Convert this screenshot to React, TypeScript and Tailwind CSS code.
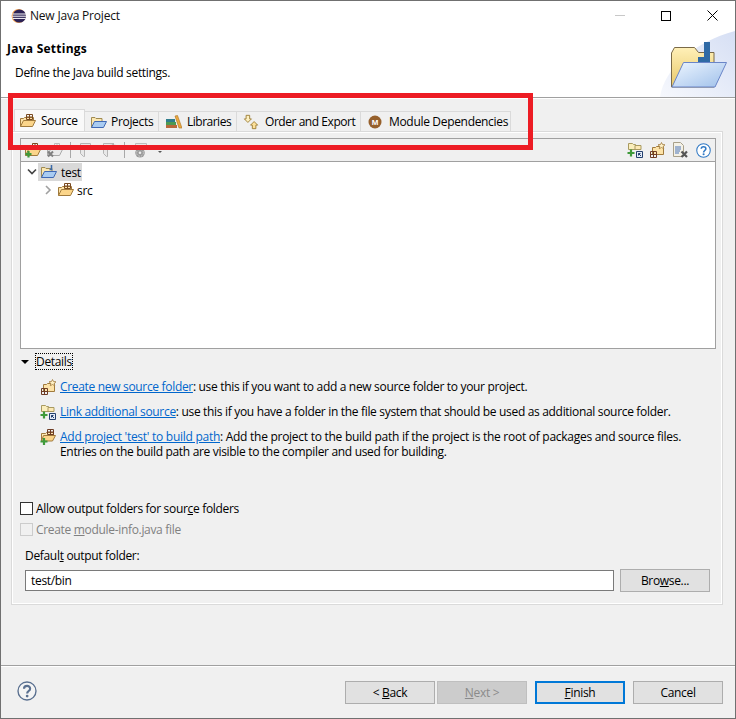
import type { ReactNode } from 'react';

function EclipseIcon() {
  return (
    <svg width="16" height="16" viewBox="0 0 16 16">
      <circle cx="7.6" cy="8" r="7" fill="#f0a050" />
      <circle cx="8.4" cy="8" r="6.6" fill="#2c2255" />
      <path d="M1.500 6h13.500M1.200 8.200h14M1.600 10.400h13.200" stroke="#fff" strokeWidth="1" />
    </svg>
  );
}

function OrangeFolder({ disabled = false }: { disabled?: boolean }) {
  const body = disabled ? '#dedede' : '#fde3a8';
  const line = disabled ? '#aaaaaa' : '#a07a3c';
  return (
    <>
      <path d="M.5 13.500V5.500h3l1-1h9v3" fill={body} stroke={line} />
      <path d="M.5 13.500l3-6h12l-3 6z" fill={disabled ? '#eaeaea' : '#fbd58a'} stroke={line} />
    </>
  );
}

function SourceFolder() {
  return (
    <svg width="16" height="16" viewBox="0 0 16 16">
      <OrangeFolder />
      <path d="M6.500 1.500h6v5h-6zM9.500 1v6M6 4h7" fill="none" stroke="#7a4a20" strokeWidth="1" />
    </svg>
  );
}

function ProjectFolder({ jmark = false }: { jmark?: boolean }) {
  return (
    <svg width="17" height="16" viewBox="0 0 17 16">
      <path d="M1.500 13.500V3.500h3.500l1 1h6v3" fill="#fbe7b0" stroke="#a08a50" />
      <path d="M1.500 13.500l3-6h12l-3 6z" fill="#a9ccf2" stroke="#3f68b4" />
      {jmark && <path d="M11.500 1v4.500h-2" fill="none" stroke="#3a6aa8" strokeWidth="1.500" />}
    </svg>
  );
}

function Books() {
  return (
    <svg width="16" height="16" viewBox="0 0 16 16">
      <path d="M0 5h9v3H0z" fill="#2f7d8c" />
      <path d="M0 8h10v3H0z" fill="#4d9a52" />
      <path d="M0 11h11v3H0z" fill="#b8683a" />
      <path d="M9 2l2.500-.5L16 14h-3z" fill="#eba93e" stroke="#a8701e" strokeWidth=".6" />
    </svg>
  );
}

function OrderArrows() {
  return (
    <svg width="16" height="16" viewBox="0 0 18 16">
      <path d="M3.500.5h4v4h2l-4 4-4-4h2z" fill="#fdf0c0" stroke="#9a7a30" />
      <path d="M12.500 7.500l4 4h-2v4h-4v-4h-2z" fill="#fce09a" stroke="#9a7a30" />
    </svg>
  );
}

function ModuleIcon() {
  return (
    <svg width="14" height="14" viewBox="0 0 14 14">
      <circle cx="7" cy="7" r="6.500" fill="#96602c" />
      <text x="7" y="10" textAnchor="middle" fontSize="8" fontWeight="700" fill="#fff" fontFamily="'Liberation Sans', sans-serif">
        M
      </text>
    </svg>
  );
}

function NewSourceIcon({ disabled = false }: { disabled?: boolean }) {
  return (
    <svg width="17" height="16" viewBox="0 0 17 16">
      <OrangeFolder disabled={disabled} />
      <path d="M7.500 1.500h5v5h-5zM10 1v6M7 4h6" fill="none" stroke={disabled ? '#bbbbbb' : '#7a4a20'} />
      {disabled ? (
        <path d="M1 9.500l5 5M6 9.500l-5 5" stroke="#808080" strokeWidth="2" />
      ) : (
        <path d="M3.500 9v6.500M.5 12.200h6" stroke="#3f9a3a" strokeWidth="2.200" />
      )}
    </svg>
  );
}

function DisabledPage({ mark = false }: { mark?: boolean }) {
  return (
    <svg width="15" height="16" viewBox="0 0 15 16">
      <path d="M1.500 1.500h10v3h-6v10h-1l-3-3z" fill="#e8e8e8" stroke="#b4b4b4" />
      {mark && <path d="M11 1v5M8.500 3.500h5" stroke="#b0b0b0" strokeWidth="1.500" />}
    </svg>
  );
}

function DisabledGear() {
  return (
    <svg width="14" height="16" viewBox="0 0 14 16">
      <path d="M1.500 1.500h11v6h-11z" fill="#e8e8e8" stroke="#bcbcbc" />
      <circle cx="6" cy="10.800" r="4.800" fill="#9c9c9c" />
      <circle cx="6" cy="10.800" r="3.400" fill="none" stroke="#cfcfcf" strokeDasharray="1.500 1.200" />
      <circle cx="6" cy="10.800" r="1.300" fill="#ececec" />
    </svg>
  );
}

function LinkFolder() {
  return (
    <svg width="16" height="16" viewBox="0 0 16 16">
      <path d="M1.500 7.500v-6h4l1 1h2v5z" fill="#fbeebc" stroke="#a89a60" />
      <path d="M8 3.500h6v4H8z" fill="#fde9b4" stroke="#a89a60" />
      <path d="M4 7.500v7M.5 11h7" stroke="#3f9a3a" strokeWidth="2.200" />
      <path d="M9.500 9.500h6v6h-6z" fill="#e4ecf8" stroke="#24406e" />
      <path d="M11.500 11.500l2.500 2.500M11.500 13.500v-2h2" fill="none" stroke="#24406e" />
    </svg>
  );
}

function StarFolder() {
  return (
    <svg width="17" height="16" viewBox="0 0 17 16">
      <path d="M3.500 12.500v-7h3l1-1h7v8z" fill="#fde3a8" stroke="#a07a3c" />
      <path d="M12.500 .5l1 2 2.500.3-1.800 1.600.5 2.300-2.200-1.200-2.200 1.200.5-2.300L9 2.800l2.500-.3z" fill="#fef0c4" stroke="#a07a3c" strokeWidth=".8" />
      <path d="M1.500 9.500h6v6h-6zM4.500 9v7M1 12.500h7" fill="none" stroke="#6e3c24" />
    </svg>
  );
}

function RemoveDoc() {
  return (
    <svg width="16" height="16" viewBox="0 0 16 16">
      <path d="M1.500 .5h7l3 3v11h-10z" fill="#f4f1e6" stroke="#a8a08a" />
      <path d="M3 5h6M3 7h6M3 9h5M3 11h4" stroke="#4a74b8" />
      <path d="M9.500 9.500l5.500 5.500M15 9.500L9.500 15" stroke="#555" strokeWidth="2.200" />
    </svg>
  );
}

function HelpIcon({ size, color, fill }: { size: number; color: string; fill: string }) {
  return (
    <svg width={size} height={size} viewBox="0 0 16 16">
      <circle cx="8" cy="8" r="7.200" fill={fill} stroke={color} strokeWidth="1.100" />
      <path d="M5.600 6.200c0-3 4.900-3 4.900-.1 0 1.900-2.400 1.900-2.400 3.900" fill="none" stroke={color} strokeWidth="1.700" />
      <circle cx="8.100" cy="12" r="1.100" fill={color} />
    </svg>
  );
}

function AddFolder() {
  return (
    <svg width="16" height="16" viewBox="0 0 16 16">
      <path d="M1.500 12V4.500h4l1-1h7v3" fill="#fde9b4" stroke="#a07a3c" />
      <path d="M1.500 12l2-5.500h12l-3 5.500z" fill="#fbd58a" stroke="#a07a3c" />
      <path d="M7.500 .5h6v5h-6zM10.500 0v6M7 3h7" fill="none" stroke="#6e3c24" />
      <path d="M4 9v7M.5 12.500h7" stroke="#3f9a3a" strokeWidth="2.200" />
    </svg>
  );
}

function BannerIcon() {
  return (
    <svg width="80" height="67" viewBox="655 30 80 67" className="shrink-0">
      <defs>
        <linearGradient id="wash" x1="0" y1="1" x2="1" y2="0">
          <stop offset="0" stopColor="#f6f8fd" />
          <stop offset="1" stopColor="#d6dff4" />
        </linearGradient>
        <linearGradient id="front" x1="0" y1="0" x2="1" y2="1">
          <stop offset="0" stopColor="#eef6ff" />
          <stop offset="1" stopColor="#9fc0ea" />
        </linearGradient>
        <linearGradient id="back" x1="0" y1="0" x2="0" y2="1">
          <stop offset="0" stopColor="#fff0b8" />
          <stop offset="1" stopColor="#e8c868" />
        </linearGradient>
      </defs>
      <path d="M660 97c4-28 34-55 75-66v66z" fill="url(#wash)" />
      <path d="M671.500 87V53l3-5.500h20l4 5h15.500V87z" fill="url(#back)" stroke="#7a6a48" />
      <path d="M704 42h6v20h-12v-5h6z" fill="#2f6aa5" />
      <path d="M683.500 62.500h43L715 87h-43z" fill="url(#front)" stroke="#6a85c8" />
    </svg>
  );
}

function Tab({ className, active, icon, label }: { className: string; active?: boolean; icon: ReactNode; label: string }) {
  return (
    <div
      className={`${className} flex items-center border-r border-t border-[#dadada] ${
        active ? 'h-[22px] bg-[#f9f9f9] border-l' : 'h-[20px]'
      }`}
    >
      {icon}
      <span>{label}</span>
    </div>
  );
}

function DialogButton({ children, disabled, focused }: { children: ReactNode; disabled?: boolean; focused?: boolean }) {
  return (
    <button
      className={`w-[90px] h-[23px] flex items-center justify-center ${
        disabled
          ? 'bg-[#cccccc] border border-[#bfbfbf] text-[#8a8a8a]'
          : focused
            ? 'bg-[#e1e1e1] border-2 border-[#0078d7]'
            : 'bg-[#e1e1e1] border border-[#adadad]'
      }`}
    >
      <span>{children}</span>
    </button>
  );
}

function Link({ children }: { children: ReactNode }) {
  return <span className="text-[#0066cc] underline">{children}</span>;
}

export default function App() {
  return (
    <div className="h-[719px] w-[736px] flex flex-col overflow-hidden relative border border-[#707070] bg-[#f0f0f0] text-[12px] leading-[15px] text-black font-['Open_Sans','Liberation_Sans',sans-serif] tracking-[-0.32px]">
      {/* titulo */}
      <div className="h-[29px] shrink-0 bg-white flex items-center pl-[10px]">
        <EclipseIcon />
        <span className="ml-[3px] text-[#111] tracking-[-0.2px]">New Java Project</span>
        <div className="ml-auto flex items-center">
          <div className="w-[46px] flex justify-center">
            <div className="w-[10px] h-px bg-[#c8c8c8]" />
          </div>
          <div className="w-[46px] flex justify-center">
            <div className="w-[10px] h-[10px] border border-black" />
          </div>
          <div className="w-[46px] flex justify-center">
            <svg width="11" height="11" viewBox="0 0 11 11">
              <path d="M.5.5l10 10M10.500.5l-10 10" stroke="#000" />
            </svg>
          </div>
        </div>
      </div>

      {/* cabecalho */}
      <div className="h-[68px] shrink-0 bg-white flex justify-between border-b border-[#a0a0a0]">
        <div className="pl-[6px] pt-[11px]">
          <div className="font-bold tracking-[0.25px]">Java Settings</div>
          <div className="pl-[8px] mt-[9px]">Define the Java build settings.</div>
        </div>
        <BannerIcon />
      </div>
      <div className="h-px shrink-0 bg-white" />

      {/* corpo */}
      <div className="flex-1 min-h-0 pl-[10px] pt-[10px]">
        <div className="flex items-end pl-[3px] h-[22px]">
          <Tab className="w-[71px] pl-[5px] gap-[5px]" active icon={<SourceFolder />} label="Source" />
          <Tab className="w-[74px] pl-[5px] gap-[4px]" icon={<ProjectFolder />} label="Projects" />
          <Tab className="w-[78px] pl-[7px] gap-[5px] tracking-[-0.5px]" icon={<Books />} label="Libraries" />
          <Tab className="w-[124px] pl-[6px] gap-[6px] tracking-[-0.45px]" icon={<OrderArrows />} label="Order and Export" />
          <Tab className="w-[150px] pl-[7px] gap-[7px]" icon={<ModuleIcon />} label="Module Dependencies" />
        </div>

        <div className="w-[712px] h-[474px] border border-[#dadada] shadow-[inset_0_0_0_1px_#fff] pl-[8px] pt-[6px]">
          <div className="w-[696px] h-[211px] border border-[#a0a0a0] flex flex-col">
            <div className="h-[23px] shrink-0 flex items-center pl-[4px] border-b border-[#a0a0a0]">
              <NewSourceIcon />
              <div className="ml-[5px]"><NewSourceIcon disabled /></div>
              <div className="ml-[6px] w-px h-[16px] bg-[#a8a8a8]" />
              <div className="ml-[8px]"><DisabledPage /></div>
              <div className="ml-[8px]"><DisabledPage mark /></div>
              <div className="ml-[7px] w-px h-[16px] bg-[#a8a8a8]" />
              <div className="ml-[9px]"><DisabledGear /></div>
              <div className="ml-[10px] mt-[3px] w-0 h-0 border-x-[2px] border-x-transparent border-t-[2px] border-t-[#555]" />
              <div className="ml-auto flex items-center gap-[6px] pr-[4px]">
                <LinkFolder />
                <StarFolder />
                <RemoveDoc />
                <div className="ml-[2px] flex">
                  <HelpIcon size={15} color="#2f78c4" fill="#ffffff" />
                </div>
              </div>
            </div>
            <div className="flex-1 bg-white pt-px">
              <div className="h-[18px] flex items-center pl-[6px]">
                <svg width="10" height="8" viewBox="0 0 10 8">
                  <path d="M1 1.500l4 4 4-4" fill="none" stroke="#444" strokeWidth="1.600" />
                </svg>
                <div className="ml-[1px] h-[18px] w-[44px] bg-[#d9d9d9] flex items-center pl-[2px]">
                  <ProjectFolder jmark />
                  <span className="ml-[4px]">test</span>
                </div>
              </div>
              <div className="h-[18px] flex items-center pl-[24px]">
                <svg width="7" height="10" viewBox="0 0 7 10">
                  <path d="M1 1l4 4-4 4" fill="none" stroke="#a0a0a0" strokeWidth="1.600" />
                </svg>
                <div className="ml-[6px]"><SourceFolder /></div>
                <span className="ml-[3px]">src</span>
              </div>
            </div>
          </div>

          <div className="mt-[5px] h-[15px] flex items-center pl-px">
            <div className="w-0 h-0 border-x-[4px] border-x-transparent border-t-[4px] border-t-black" />
            <span className="ml-[7px] outline-1 outline-dotted outline-black">Details</span>
          </div>

          <div className="mt-[10px] pl-[20px] h-[15px] flex items-center whitespace-nowrap">
            <StarFolder />
            <span className="ml-[3px]"><Link>Create new source folder</Link>: use this if you want to add a new source folder to your project.</span>
          </div>
          <div className="mt-[10px] pl-[20px] h-[15px] flex items-center whitespace-nowrap">
            <LinkFolder />
            <span className="ml-[4px]"><Link>Link additional source</Link>: use this if you have a folder in the file system that should be used as additional source folder.</span>
          </div>
          <div className="mt-[10px] pl-[20px] flex whitespace-nowrap">
            <AddFolder />
            <div className="ml-[4px]">
              <div className="tracking-[-0.27px]"><Link>Add project 'test' to build path</Link>: Add the project to the build path if the project is the root of packages and source files.</div>
              <div>Entries on the build path are visible to the compiler and used for building.</div>
            </div>
          </div>

          <div className="mt-[41px] h-[16px] flex items-center">
            <div className="w-[13px] h-[13px] border border-[#333] bg-white" />
            <span className="ml-[3px]">Allow output folders for sour<u>c</u>e folders</span>
          </div>
          <div className="mt-[5px] h-[16px] flex items-center text-[#808080]">
            <div className="w-[13px] h-[13px] border border-[#cccccc]" />
            <span className="ml-[3px]">Create <u>m</u>odule-info.java file</span>
          </div>
          <div className="mt-[11px] pl-[5px] h-[15px]">
            Defaul<u>t</u> output folder:
          </div>
          <div className="mt-[6px] pl-[5px] flex items-center h-[23px]">
            <div className="w-[589px] h-[21px] border border-[#7a7a7a] bg-white pl-[5px] flex items-center">test/bin</div>
            <div className="ml-[6px]">
              <DialogButton>Bro<u>w</u>se...</DialogButton>
            </div>
          </div>
        </div>
      </div>

      {/* rodape */}
      <div className="h-[53px] shrink-0 border-t border-[#a0a0a0] shadow-[inset_0_1px_0_#fff] flex items-start pt-[15px] pl-[16px]">
        <HelpIcon size={20} color="#5a7090" fill="#f4f4f4" />
        <div className="ml-auto flex pr-[12px]">
          <DialogButton>&lt; <u>B</u>ack</DialogButton>
          <div className="ml-[2px]"><DialogButton disabled><u>N</u>ext &gt;</DialogButton></div>
          <div className="ml-[8px]"><DialogButton focused><u>F</u>inish</DialogButton></div>
          <div className="ml-[8px]"><DialogButton>Cancel</DialogButton></div>
        </div>
      </div>

      {/* marcacao vermelha */}
      <div className="absolute left-[7px] top-[92px] w-[525px] h-[57px] border-[5px] border-[#ed1c24] pointer-events-none" />
    </div>
  );
}
